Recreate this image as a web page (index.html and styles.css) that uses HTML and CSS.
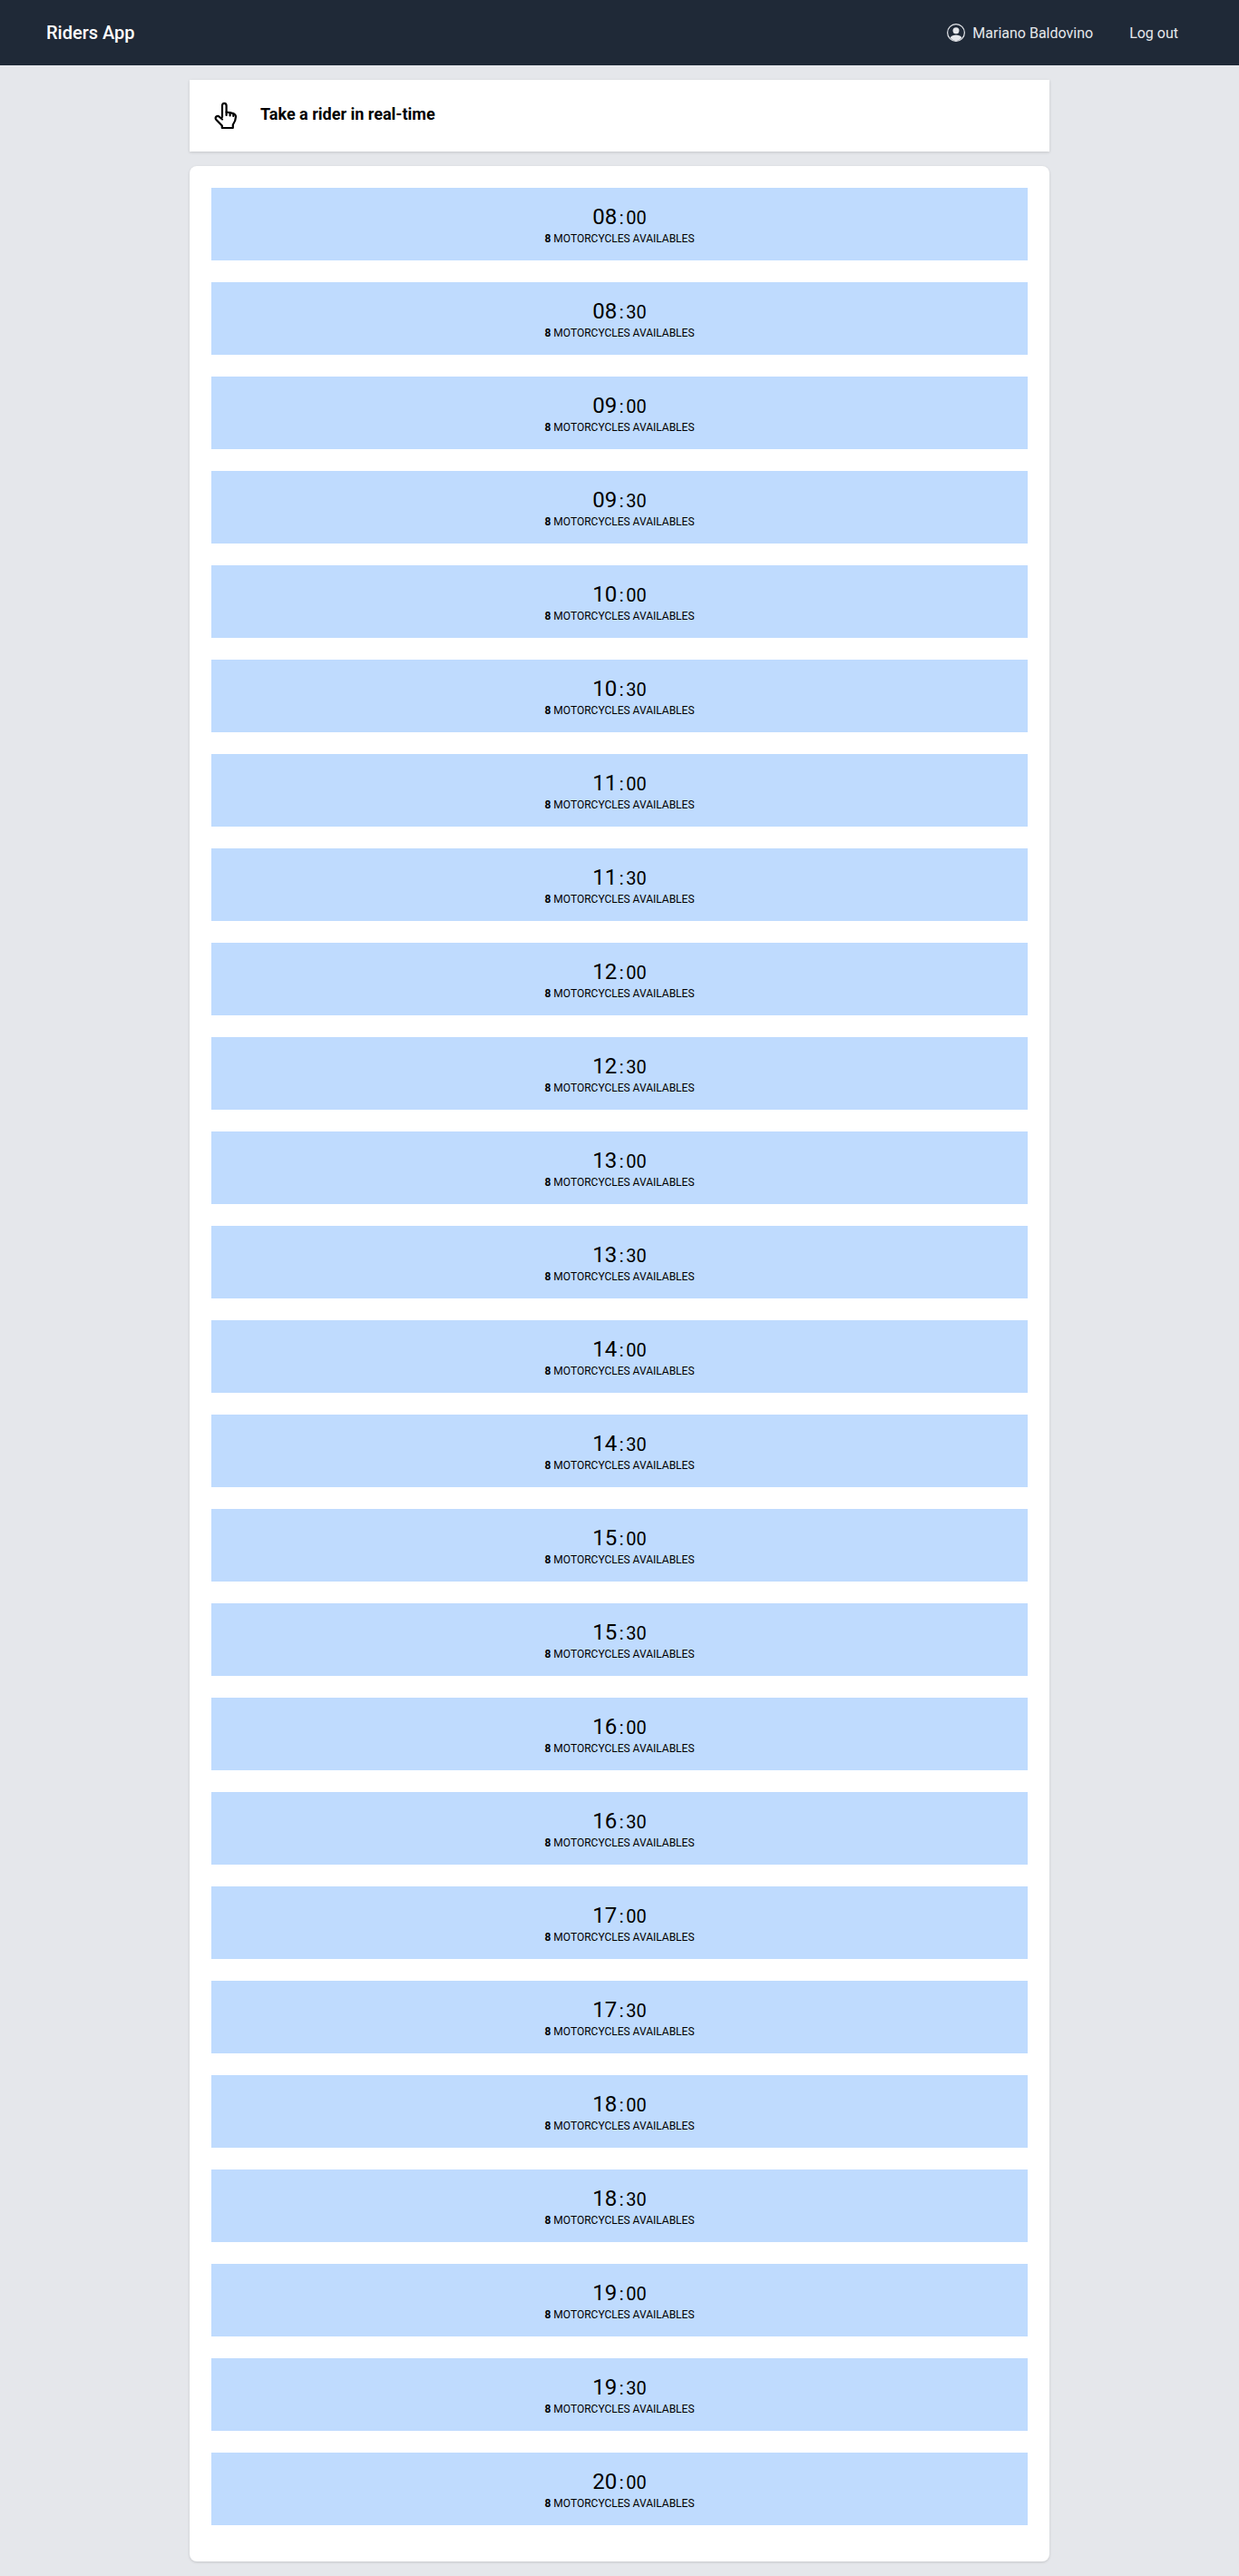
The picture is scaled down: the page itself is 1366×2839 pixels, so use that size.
FILE: index.html
```html
<!DOCTYPE html>
<html lang="en">

<head>
    <meta charset="UTF-8">
    <meta name="viewport" content="width=device-width, initial-scale=1.0">
    <title>Riders App</title>
    <link rel="stylesheet" href="styles.css">
</head>

<body>
    <header class="navbar">
        <span class="brand">Riders App</span>
        <div class="nav-right">
            <span class="nav-user">
                <svg class="user-icon" viewBox="0 0 20 20" aria-hidden="true">
                    <circle class="user-ring" cx="10" cy="10" r="9.4"></circle>
                    <circle cx="10" cy="7.8" r="3.5"></circle>
                    <path d="M3.6 15.6C5 13 7.2 12.4 10 12.4s5 .6 6.4 3.2C14.800 17.700 12.600 19 10 19s-4.800-1.300-6.400-3.400z"></path>
                </svg>
                Mariano Baldovino
            </span>
            <span class="nav-link">Log out</span>
        </div>
    </header>

    <main class="container">
        <div class="title-card">
            <svg class="hand-icon" viewBox="0 0 26 31" aria-hidden="true">
                <path d="M9 17V4.500C9 2.900 10 1.800 11.300 1.800S13.600 2.900 13.600 4.500V11.500L18.500 12.300C21.800 12.900 24 13.700 24 16.500C24 20 22.500 23 20.800 25.500V29H8.800V26.500C6.500 24 4.500 22 2.300 19.700C1.300 18.600 1.500 17.200 2.500 16.500C3.600 15.700 4.800 15.800 5.800 16.700L9 19.500"></path>
                <path d="M13.600 11.500V15M17.600 12.200V15.500M21.300 13V16"></path>
            </svg>
            <h1 class="title">Take a rider in real-time</h1>
        </div>

        <div class="slots-card" id="slots"></div>
    </main>

    <script>
        const slots = document.getElementById('slots');

        for (let hour = 8; hour <= 20; hour++) {
            ['00', '30'].forEach((minutes) => {
                if (hour === 20 && minutes === '30') return;

                const slot = document.createElement('div');
                slot.className = 'slot';
                slot.innerHTML = `
                    <div class="slot-time">
                        <span>${String(hour).padStart(2, '0')}</span><span class="slot-colon">:</span><span class="slot-minutes">${minutes}</span>
                    </div>
                    <div class="slot-info"><strong>8</strong> MOTORCYCLES AVAILABLES</div>
                `;
                slots.appendChild(slot);
            });
        }
    </script>
</body>

</html>
```

FILE: styles.css
```css
* {
    margin: 0;
    padding: 0;
    box-sizing: border-box;
    font-family: Roboto, 'Liberation Sans', sans-serif;
}

body {
    background: #e5e7eb;
    min-height: 100vh;
    padding-bottom: 16px;
}

.navbar {
    display: flex;
    align-items: center;
    justify-content: space-between;
    height: 72px;
    padding: 0 67px 0 51px;
    background: #1f2937;
}

.brand {
    font-size: 20px;
    font-weight: 500;
    color: #fff;
}

.nav-right {
    display: flex;
    align-items: center;
    gap: 40px;
}

.nav-user {
    display: flex;
    align-items: center;
    gap: 8px;
    font-size: 16px;
    color: #e5e7eb;
}

.user-icon {
    width: 20px;
    height: 20px;
    fill: #e5e7eb;
}

.user-ring {
    fill: none;
    stroke: #e5e7eb;
    stroke-width: 1.2;
}

.nav-link {
    font-size: 16px;
    color: #e5e7eb;
}

.container {
    width: 948px;
    margin: 16px auto 0;
}

.title-card {
    display: flex;
    align-items: center;
    gap: 25px;
    height: 79px;
    padding: 0 24px 0 27px;
    margin-bottom: 16px;
    background: #fff;
    box-shadow: 0 1px 3px rgba(0, 0, 0, 0.15);
}

.hand-icon {
    width: 26px;
    height: 31px;
    fill: none;
    stroke: #000;
    stroke-width: 2.200;
    stroke-linejoin: round;
    stroke-linecap: round;
}

.title {
    font-size: 18px;
    font-weight: 700;
    color: #000;
    margin-bottom: 4px;
}

.slots-card {
    padding: 24px 24px 40px;
    background: #fff;
    border-radius: 8px;
    box-shadow: 0 1px 3px rgba(0, 0, 0, 0.15);
}

.slot {
    display: flex;
    flex-direction: column;
    align-items: center;
    justify-content: center;
    height: 80px;
    margin-bottom: 24px;
    background: #bfdbfe;
    color: #000;
}

.slot:last-child {
    margin-bottom: 0;
}

.slot-time {
    font-size: 24px;
    line-height: 32px;
}

.slot-colon {
    font-size: 20px;
    line-height: 28px;
    padding: 0 2.5px;
}

.slot-minutes {
    font-size: 20px;
    line-height: 28px;
}

.slot-info {
    font-size: 12px;
    line-height: 16px;
}
```
